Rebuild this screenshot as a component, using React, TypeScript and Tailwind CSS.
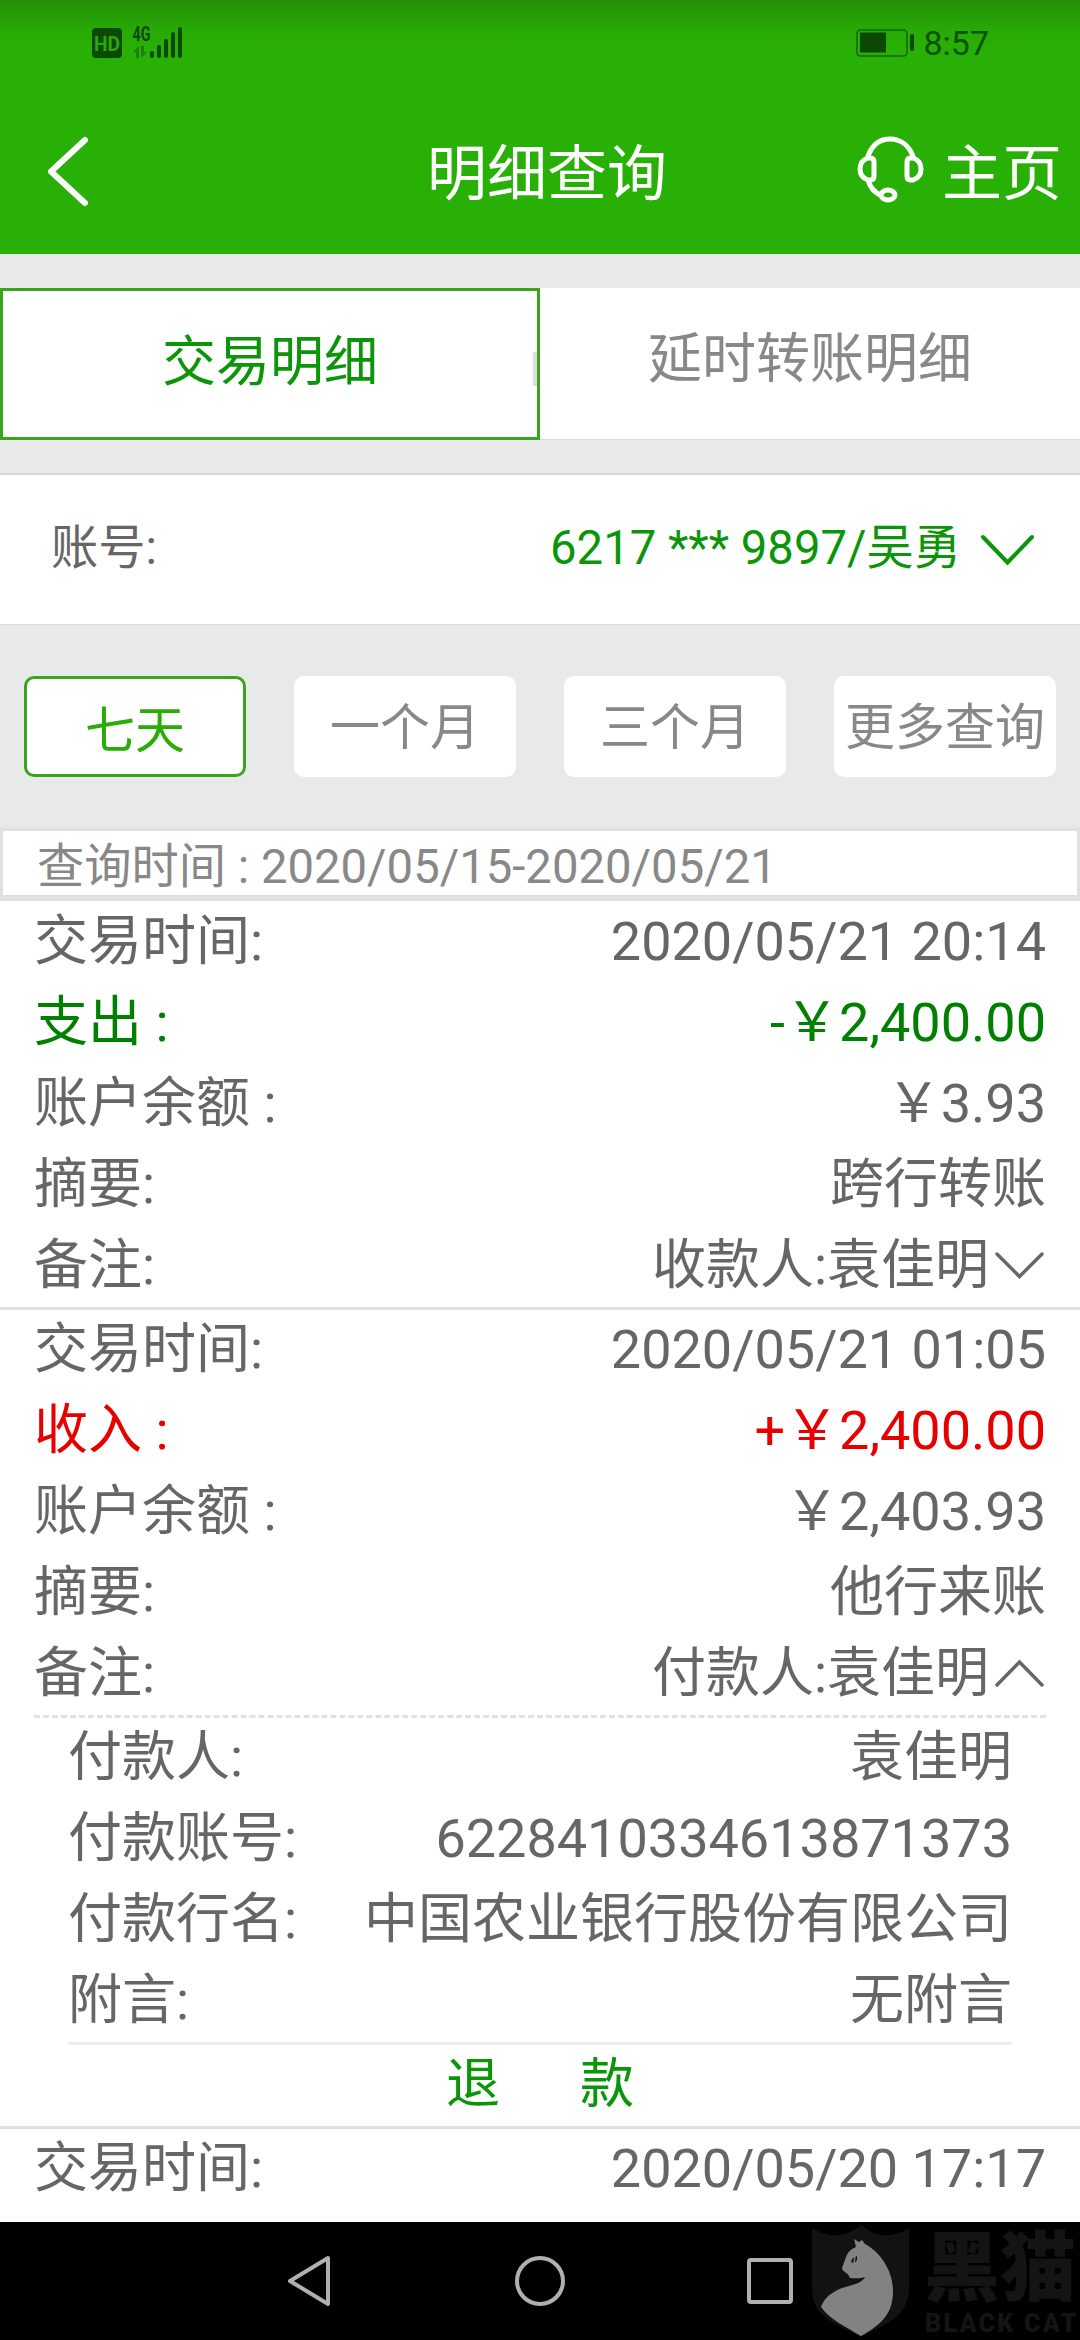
import type { ReactNode } from "react";

type Tone = "normal" | "out" | "in";

const toneClass: Record<Tone, string> = {
  normal: "text-[#666666]",
  out: "text-[#008000]",
  in: "text-[#e60000]",
};

function Row({ label, value, tone = "normal" }: { label: string; value: ReactNode; tone?: Tone }) {
  return (
    <div className={`flex h-[81px] items-center justify-between pb-px text-[54px] leading-[80px] whitespace-pre ${toneClass[tone]}`}>
      <span>{label}</span>
      <span className="flex items-center">{value}</span>
    </div>
  );
}

function StatusBar() {
  return (
    <div className="flex h-[86px] items-start justify-between bg-linear-to-b from-[#238f06] via-[#28aa06] via-35% to-[#29b006] to-60% pr-[91px] pl-[92px] pt-[21px]">
      <svg width="92" height="40" viewBox="0 -4 92 40" fill="#0c4a03">
        <rect x="0" y="3" width="30" height="30" rx="4" />
        <text x="15" y="25.5" textAnchor="middle" fontSize="21" fontWeight="700" fill="#2aa80a" textLength="26" lengthAdjust="spacingAndGlyphs" fontFamily="Roboto, sans-serif">HD</text>
        <text x="40.5" y="16" fontSize="20" fontWeight="700" textLength="18" lengthAdjust="spacingAndGlyphs" fontFamily="Roboto, sans-serif">4G</text>
        <path d="M41 27l6-6v12h-3v-6zM49 21h3v6h3l-6 6z" fill="#1b8008" />
        <rect x="58" y="26" width="4" height="7" rx="2" />
        <rect x="65" y="20" width="4" height="13" rx="2" />
        <rect x="72" y="14" width="4" height="19" rx="2" />
        <rect x="79" y="7" width="4" height="26" rx="2" />
        <rect x="86" y="2" width="4" height="31" rx="2" />
      </svg>
      <div className="flex items-start pt-1">
        <svg width="60" height="36" viewBox="0 0 60 36" className="mr-[7px]">
          <rect x="1" y="5" width="50" height="26" rx="3.5" fill="none" stroke="#12680a" strokeWidth="1.6" />
          <rect x="4" y="7.500" width="26" height="20" fill="#0c4a03" />
          <rect x="54" y="9" width="4" height="17" rx="2" fill="#0c4a03" />
        </svg>
        <span className="text-[34px] leading-[37px] text-[#0b5203]">8:57</span>
      </div>
    </div>
  );
}

function Header() {
  return (
    <header className="flex h-[168px] items-center justify-between pr-[18px] pl-[44px] text-[60px] leading-[60px] text-white">
      <div className="flex flex-1">
        <svg width="48" height="76" viewBox="0 0 48 76" fill="none" stroke="white" strokeWidth="6" strokeLinecap="round" strokeLinejoin="round" className="mt-[2px]">
          <path d="M41 7L7 38.500L41 70" />
        </svg>
      </div>
      <h1 className="pt-[9px] pr-[12px]">明细查询</h1>
      <div className="flex flex-1 items-center justify-end">
        <svg width="70" height="70" viewBox="0 0 70 70" fill="none" stroke="white" strokeWidth="5" className="mt-[2px] mr-[15px]">
          <path d="M10 23C14 10 22 3 33 3S53 10 57 23" />
          <path d="M11 22H13.500Q17 22 17 26V40Q17 44 13.500 44H11C5 42 3 38 3 33S5 24 11 22Z" />
          <path d="M56 22H53.500Q50 22 50 26V40Q50 44 53.500 44H56C62 42 64 38 64 33S62 24 56 22Z" />
          <path d="M11 44C13 51 17 56 23 59" />
          <ellipse cx="31" cy="59" rx="7" ry="5" />
        </svg>
        <span className="pt-[9px]">主页</span>
      </div>
    </header>
  );
}

function Chevron({ up = false }: { up?: boolean }) {
  return (
    <svg width="57" height="30" viewBox="0 0 57 30" fill="none" stroke="#666666" strokeWidth="3.4" strokeLinecap="round" className="mt-[-2px]">
      <path d={up ? "M8 27L30.500 4L53 27" : "M8 4L30.500 26.500L53 4"} />
    </svg>
  );
}

function Watermark() {
  return (
    <div className="absolute top-0 right-0 flex h-[118px] w-[269px] overflow-hidden">
      <svg width="99" height="118" viewBox="0 0 99 118" className="shrink-0">
        <path d="M1 6Q26 22 50 3Q73 22 98 6V66C98 94 76 102 50 115C24 102 1 94 1 66Z" fill="#131112" />
        <path d="M43 17L48 20L51 18L54 22C69 30 82 48 82 69C82 92 70 103 50 114C35 105 18 97 10 85C14 73 26 67 38 64C48 61 52 59 54 55C49 57 42 56 39 56C37 50 31 50 31 46L35 35C37 29 42 26 45 25Z" fill="#828282" />
        <path d="M40 40Q41 35 46 34Q47 40 42 41Z" fill="#131112" />
        <path d="M44 34L43 41" stroke="#828282" strokeWidth="1.5" />
      </svg>
      <div className="ml-[14px] flex flex-col whitespace-nowrap text-[#161314]">
        <span className="mt-[9px] text-[76px] leading-[76px] font-black">黑猫</span>
        <span className="pl-px text-[25px] leading-[34px] font-black tracking-[2.3px]">BLACK CAT</span>
      </div>
    </div>
  );
}

const periods = ["一个月", "三个月", "更多查询"];

export default function App() {
  return (
    <div className="flex h-[2340px] w-[1080px] flex-col overflow-hidden bg-[#e8eae9] font-[Roboto,'Noto_Sans_CJK_SC',sans-serif]">
      <div className="h-[254px] shrink-0 bg-[#29b006]">
        <StatusBar />
        <Header />
      </div>

      <div className="mt-[34px] flex h-[152px] shrink-0 text-[54px]">
        <div className="relative flex w-[540px] items-center justify-center border-[3px] border-[#3aa41c] bg-white pb-[3px] text-[#0b9508]">
          交易明细
          <span className="absolute top-[61px] right-0 h-[34px] w-[4px] bg-[#dbe0db]" />
        </div>
        <div className="flex h-[152px] flex-1 items-center justify-center border-b border-[#dcdedd] bg-white pb-[9px] text-[#888888]">延时转账明细</div>
      </div>

      <div className="mt-[33px] flex h-[152px] shrink-0 items-center justify-between border-t-2 border-b border-[#d9dbda] bg-white pr-[46px] pb-[3px] pl-[51px] text-[47.250px]">
        <span className="text-[#666666]">账号:</span>
        <div className="flex items-center text-[#0b9508]">
          <span>6217 *** 9897/吴勇</span>
          <svg width="56" height="34" viewBox="2 0 56 34" fill="none" stroke="currentColor" strokeWidth="4" strokeLinecap="round" className="mt-[3px] ml-[17px]">
            <path d="M7 4L31.500 29.500L56 4" />
          </svg>
        </div>
      </div>

      <div className="mt-[51px] grid shrink-0 grid-cols-4 gap-[48px] px-[24px] text-[50px]">
        <button className="flex h-[101px] items-center justify-center rounded-[10px] border-[3px] border-[#3aa41c] bg-white pt-[10px] text-[#29ad06]">七天</button>
        {periods.map((p) => (
          <button key={p} className="flex h-[101px] items-center justify-center rounded-[10px] bg-white pt-[3px] whitespace-nowrap text-[#888888]">
            {p}
          </button>
        ))}
      </div>

      <div className="mt-[51px] flex h-[73px] shrink-0 items-center border-[3px] border-b-[6px] border-[#e0e0e0] bg-white px-[34px] pt-[7px] text-[47.250px] leading-[56px] text-[#888888]">
        查询时间 : 2020/05/15-2020/05/21
      </div>

      <main className="h-[1321px] shrink-0 overflow-hidden bg-white">
        <section className="border-b-[3px] border-[#e0e0e0] px-[34px] pt-px">
          <Row label="交易时间:" value="2020/05/21 20:14" />
          <Row label="支出 :" value="-￥2,400.00" tone="out" />
          <Row label="账户余额 :" value="￥3.93" />
          <Row label="摘要:" value="跨行转账" />
          <Row label="备注:" value={<>收款人:袁佳明<Chevron /></>} />
        </section>
        <section className="border-b-[3px] border-[#e0e0e0] px-[34px]">
          <Row label="交易时间:" value="2020/05/21 01:05" />
          <Row label="收入 :" value="+￥2,400.00" tone="in" />
          <Row label="账户余额 :" value="￥2,403.93" />
          <Row label="摘要:" value="他行来账" />
          <Row label="备注:" value={<>付款人:袁佳明<Chevron up /></>} />
          <div className="border-t-[3px] border-dashed border-[#e0e0e0] px-[34px]">
            <Row label="付款人:" value="袁佳明" />
            <Row label="付款账号:" value="6228410334613871373" />
            <Row label="付款行名:" value="中国农业银行股份有限公司" />
            <Row label="附言:" value="无附言" />
            <div className="flex h-[84px] items-center justify-center gap-[80px] border-t-[3px] border-[#eeeeee] pb-px text-[54px] leading-[80px] text-[#0b9508]">
              <span>退</span>
              <span>款</span>
            </div>
          </div>
        </section>
        <section className="px-[34px]">
          <Row label="交易时间:" value="2020/05/20 17:17" />
        </section>
      </main>

      <nav className="relative flex h-[118px] shrink-0 items-center justify-between bg-black pr-[286px] pl-[284px]">
        <svg width="50" height="54" viewBox="0 0 50 54" fill="none" stroke="#b0b0b0" strokeWidth="4" strokeLinejoin="round">
          <path d="M44 4V50L6 27Z" />
        </svg>
        <svg width="52" height="52" viewBox="0 0 52 52" fill="none" stroke="#b0b0b0" strokeWidth="4">
          <circle cx="26" cy="26" r="23" />
        </svg>
        <svg width="48" height="48" viewBox="0 0 48 48" fill="none" stroke="#b0b0b0" strokeWidth="4">
          <rect x="3" y="3" width="42" height="42" rx="2" />
        </svg>
        <Watermark />
      </nav>
    </div>
  );
}
